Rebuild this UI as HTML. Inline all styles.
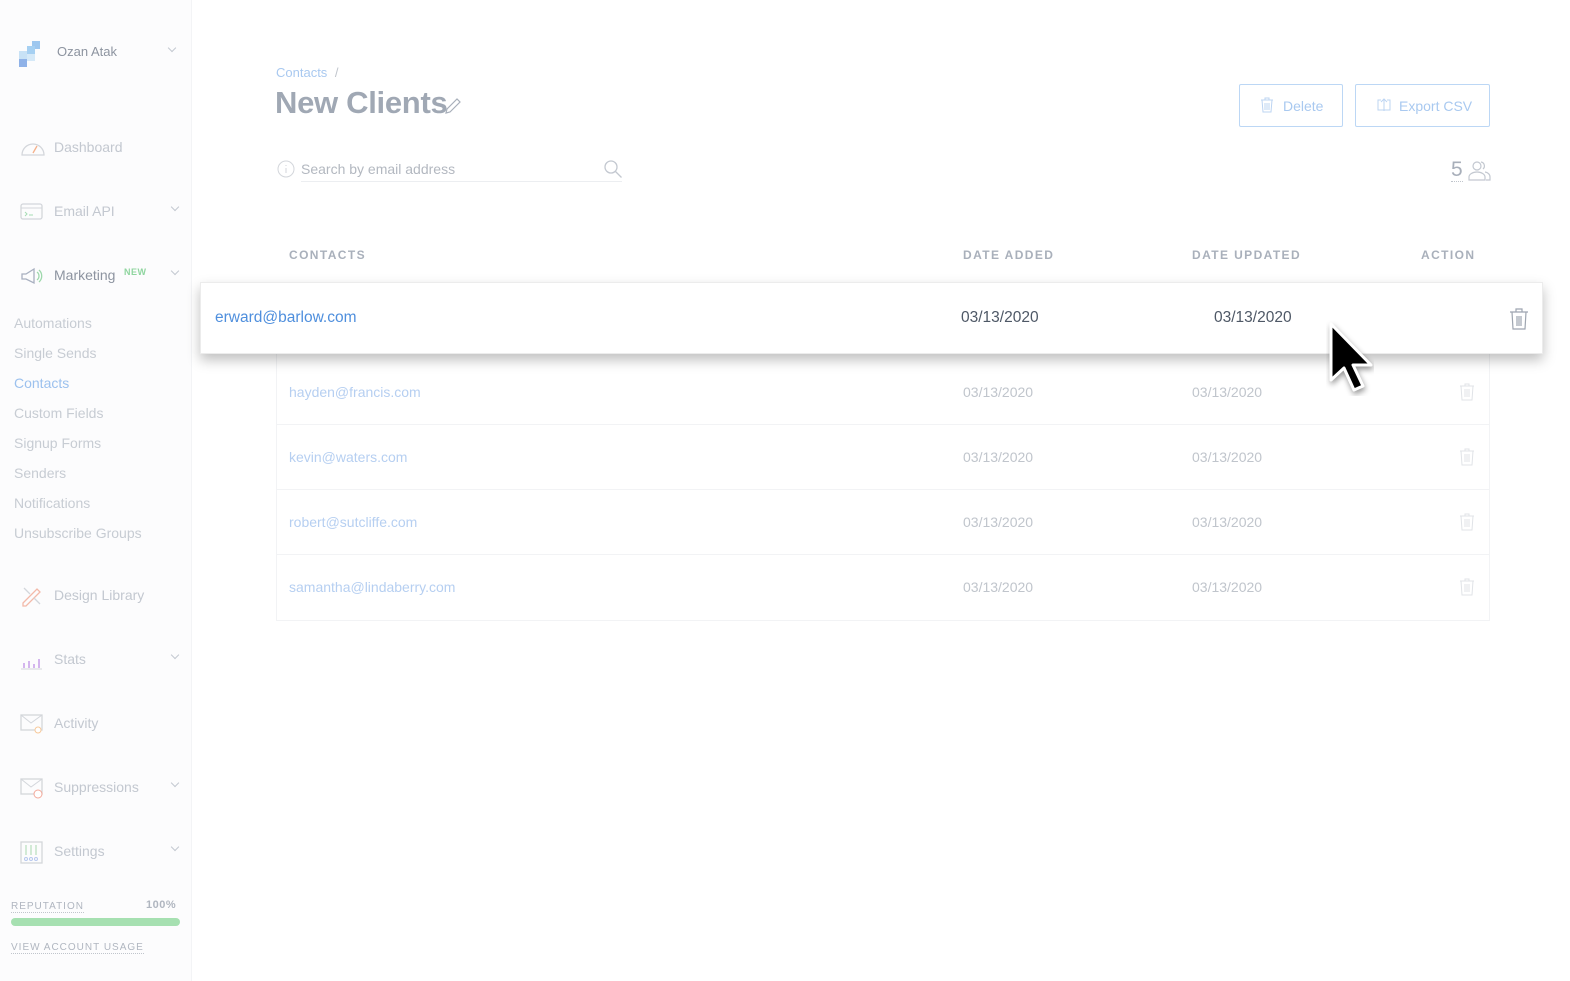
<!DOCTYPE html>
<html><head><meta charset="utf-8"><style>
*{margin:0;padding:0;box-sizing:border-box}
body{width:1570px;height:981px;background:#fff;font-family:"Liberation Sans",sans-serif;position:relative;overflow:hidden}
.sb{position:absolute;left:0;top:0;width:192px;height:981px;background:#fcfcfd;border-right:1px solid #f3f4f6}
.a{position:absolute}
.nav{position:absolute;left:54px;font-size:14px;color:#c3c8d0}
.sub{position:absolute;left:14px;font-size:14px;color:#c7ccd3}
.chev{position:absolute;left:172px;width:6px;height:6px;border-right:1px solid #c3c8d0;border-bottom:1px solid #c3c8d0;transform:rotate(45deg)}
.ic{position:absolute;left:20px}
.hd{position:absolute;top:248px;font-size:12px;font-weight:bold;letter-spacing:1.4px;color:#a9b0bb}
.row{position:absolute;left:276px;width:1214px;height:65px;border-bottom:1px solid #f2f3f5;font-size:14px}
.row span{position:absolute;top:24px}
.em{left:13px;color:#b6cff1}
.d1{left:687px;color:#c0c5cc}
.d2{left:916px;color:#c0c5cc}
.tr{position:absolute;left:1183px;top:23px}
</style></head><body>
<div class="sb">
<svg class="a" style="left:19px;top:41px" width="26" height="26"><rect x="13" y="0" width="8" height="8" fill="#9ec7ef"/><rect x="8" y="5" width="8" height="8" fill="#a6d0f2"/><rect x="0" y="10" width="8" height="8" fill="#c8e2f6"/><rect x="8" y="13" width="8" height="7" fill="#d5e9f8"/><rect x="0" y="18" width="8" height="8" fill="#8fb2e8"/></svg>
<div class="a" style="left:57px;top:44px;font-size:13px;color:#8d94a0">Ozan Atak</div>
<div class="chev" style="top:45px;left:169px"></div>
<svg class="ic" style="top:138px" width="26" height="20"><path d="M2 17A11 11 0 0 1 24 17Z" fill="none" stroke="#d3d6db" stroke-width="1.3"/><path d="M13 15L17 8" stroke="#f5b08a" stroke-width="1.3"/></svg>
<div class="nav" style="top:139px">Dashboard</div>
<svg class="ic" style="top:203px" width="24" height="18"><rect x="1" y="1" width="21" height="15" rx="2" fill="none" stroke="#d3d6db" stroke-width="1.3"/><line x1="1" y1="5" x2="22" y2="5" stroke="#d3d6db"/><path d="M5 9l2 2-2 2M9 12h4" stroke="#a5dcb4" fill="none"/></svg>
<div class="nav" style="top:203px">Email API</div><div class="chev" style="top:204px"></div>
<svg class="ic" style="top:266px" width="24" height="20"><path d="M2 8h4l8-5v14l-8-4H2z" fill="none" stroke="#a8b0c0" stroke-width="1.3"/><path d="M17 6a5 5 0 0 1 0 8M19 4a8 8 0 0 1 0 12" fill="none" stroke="#9ed8ac" stroke-width="1.3"/></svg>
<div class="nav" style="top:267px;color:#8d94a0">Marketing</div>
<div class="a" style="left:124px;top:267px;font-size:9px;font-weight:bold;color:#8fd59f;letter-spacing:.5px">NEW</div><div class="chev" style="top:268px"></div>
<div class="sub" style="top:315px">Automations</div>
<div class="sub" style="top:345px">Single Sends</div>
<div class="sub" style="top:375px;color:#9cc1ee">Contacts</div>
<div class="sub" style="top:405px">Custom Fields</div>
<div class="sub" style="top:435px">Signup Forms</div>
<div class="sub" style="top:465px">Senders</div>
<div class="sub" style="top:495px">Notifications</div>
<div class="sub" style="top:525px">Unsubscribe Groups</div>
<svg class="ic" style="top:584px" width="24" height="24"><path d="M3 19L17 5l3 3L6 22H3z" fill="none" stroke="#f3b9a9" stroke-width="1.3"/><path d="M4 4l6 6M14 14l6 6" stroke="#d3d6db" stroke-width="1.3"/></svg>
<div class="nav" style="top:587px">Design Library</div>
<svg class="ic" style="top:648px" width="24" height="22"><path d="M1 21h21" stroke="#d3d6db"/><path d="M4 20v-5M9 20v-7M14 20v-4M19 20v-9" stroke="#d4b6ee" stroke-width="2"/></svg>
<div class="nav" style="top:651px">Stats</div><div class="chev" style="top:652px"></div>
<svg class="ic" style="top:714px" width="26" height="22"><rect x="1" y="1" width="21" height="15" fill="none" stroke="#d3d6db" stroke-width="1.3"/><path d="M1 1l10 8 11-8" fill="none" stroke="#d3d6db"/><circle cx="18" cy="16" r="3" fill="#fff" stroke="#f7c99a"/></svg>
<div class="nav" style="top:715px">Activity</div>
<svg class="ic" style="top:778px" width="26" height="22"><rect x="1" y="1" width="21" height="15" fill="none" stroke="#d3d6db" stroke-width="1.3"/><path d="M1 1l10 8 11-8" fill="none" stroke="#d3d6db"/><circle cx="18" cy="16" r="4" fill="#fff" stroke="#f3a99a"/></svg>
<div class="nav" style="top:779px">Suppressions</div><div class="chev" style="top:780px"></div>
<svg class="ic" style="top:841px" width="24" height="24"><rect x="1" y="1" width="21" height="21" fill="none" stroke="#d3d6db" stroke-width="1.3"/><path d="M6 4v10M11 4v10M16 4v10" stroke="#a8d8b0"/><circle cx="6" cy="18" r="1.5" fill="none" stroke="#b8c8ee"/><circle cx="11" cy="18" r="1.5" fill="none" stroke="#b8c8ee"/><circle cx="16" cy="18" r="1.5" fill="none" stroke="#b8c8ee"/></svg>
<div class="nav" style="top:843px">Settings</div><div class="chev" style="top:844px"></div>
<div class="a" style="left:11px;top:901px;font-size:10px;color:#b0b6c0;letter-spacing:1px;border-bottom:1px dotted #c0c5cc">REPUTATION</div>
<div class="a" style="left:146px;top:899px;font-size:11px;color:#b0b6c0;font-weight:bold;letter-spacing:.5px">100%</div>
<div class="a" style="left:11px;top:918px;width:169px;height:8px;border-radius:4px;background:#a6e0b1"></div>
<div class="a" style="left:11px;top:942px;font-size:10px;color:#b0b6c0;letter-spacing:1px;border-bottom:1px dotted #c0c5cc">VIEW ACCOUNT USAGE</div>
</div>

<div class="a" style="left:276px;top:65px;font-size:13px;color:#a9c9f0">Contacts <span style="color:#c0c5cc;margin-left:4px">/</span></div>
<div class="a" style="left:275px;top:85px;font-size:31px;font-weight:bold;color:#a0a8b4;letter-spacing:-.3px">New Clients</div>
<svg class="a" style="left:444px;top:97px" width="18" height="18"><path d="M2 16l1-4L13 2l3 3L6 15z" fill="none" stroke="#a8afba" stroke-width="1.2"/></svg>
<div class="a" style="left:1239px;top:84px;width:104px;height:43px;border:1px solid #bcd7f5;border-radius:2px;color:#a9c9f0;font-size:14px;padding:13px 0 0 43px">Delete</div>
<svg class="a" style="left:1260px;top:97px" width="14" height="16"><path d="M1 3h12M5 3V1h4v2M2 3l1 12h8l1-12M5 6v7M7 6v7M9 6v7" fill="none" stroke="#bcd4f2"/></svg>
<div class="a" style="left:1355px;top:84px;width:135px;height:43px;border:1px solid #bcd7f5;border-radius:2px;color:#a9c9f0;font-size:14px;padding:13px 0 0 43px">Export CSV</div>
<svg class="a" style="left:1377px;top:97px" width="14" height="16"><path d="M4 3H1v10h12V3h-3M7 14V2M4 5l3-3 3 3" fill="none" stroke="#bcd4f2"/></svg>
<svg class="a" style="left:277px;top:160px" width="18" height="18"><circle cx="9" cy="9" r="8" fill="none" stroke="#d3d6db"/><path d="M9 8v5M9 5v1" stroke="#d3d6db"/></svg>
<div class="a" style="left:301px;top:161px;font-size:14px;color:#b3b8c0">Search by email address</div>
<div class="a" style="left:301px;top:181px;width:321px;height:1px;background:#eceef1"></div>
<svg class="a" style="left:603px;top:159px" width="20" height="20"><circle cx="8" cy="8" r="6" fill="none" stroke="#c3c8d0" stroke-width="1.3"/><path d="M12.5 12.5l6 6" stroke="#c3c8d0" stroke-width="1.3"/></svg>
<div class="a" style="left:1451px;top:159px;font-size:21px;color:#a8afba;border-bottom:1px dotted #c0c5cc;line-height:22px">5</div>
<svg class="a" style="left:1468px;top:160px" width="24" height="22"><circle cx="9" cy="6" r="4" fill="none" stroke="#c3c8d0" stroke-width="1.2"/><path d="M1 20v-3a8 5 0 0 1 16 0v3z" fill="none" stroke="#c3c8d0" stroke-width="1.2"/><path d="M13 2a4 4 0 0 1 2 7M17 12a6 5 0 0 1 5 5v3h-4" fill="none" stroke="#c3c8d0" stroke-width="1.2"/></svg>

<div class="hd" style="left:289px">CONTACTS</div>
<div class="hd" style="left:963px">DATE ADDED</div>
<div class="hd" style="left:1192px">DATE UPDATED</div>
<div class="hd" style="left:1421px">ACTION</div>

<div class="a" style="left:276px;top:290px;width:1214px;height:331px;border:1px solid #f2f3f5"></div>
<div class="row" style="top:360px"><span class="em">hayden@francis.com</span><span class="d1">03/13/2020</span><span class="d2">03/13/2020</span><svg class="tr" width="16" height="18"><path d="M1 3h14M6 3V1h4v2M2 3l1 14h10l1-14M6 6v8M8 6v8M10 6v8" fill="none" stroke="#e0e3e7"/></svg></div>
<div class="row" style="top:425px"><span class="em">kevin@waters.com</span><span class="d1">03/13/2020</span><span class="d2">03/13/2020</span><svg class="tr" width="16" height="18"><path d="M1 3h14M6 3V1h4v2M2 3l1 14h10l1-14M6 6v8M8 6v8M10 6v8" fill="none" stroke="#e0e3e7"/></svg></div>
<div class="row" style="top:490px"><span class="em">robert@sutcliffe.com</span><span class="d1">03/13/2020</span><span class="d2">03/13/2020</span><svg class="tr" width="16" height="18"><path d="M1 3h14M6 3V1h4v2M2 3l1 14h10l1-14M6 6v8M8 6v8M10 6v8" fill="none" stroke="#e0e3e7"/></svg></div>
<div class="row" style="top:555px;border-bottom:none"><span class="em">samantha@lindaberry.com</span><span class="d1">03/13/2020</span><span class="d2">03/13/2020</span><svg class="tr" width="16" height="18"><path d="M1 3h14M6 3V1h4v2M2 3l1 14h10l1-14M6 6v8M8 6v8M10 6v8" fill="none" stroke="#e0e3e7"/></svg></div>

<div class="a" style="left:200px;top:282px;width:1343px;height:72px;background:#fff;border:1px solid #ececec;box-shadow:0 6px 12px rgba(0,0,0,.25)">
<div class="a" style="left:14px;top:26px;font-size:15.5px;color:#4f8fdd">erward@barlow.com</div>
<div class="a" style="left:760px;top:26px;font-size:15.5px;color:#4e5866">03/13/2020</div>
<div class="a" style="left:1013px;top:26px;font-size:15.5px;color:#4e5866">03/13/2020</div>
<svg class="a" style="left:1308px;top:25px" width="20" height="22"><path d="M1 4h18M7 4V1h6v3M3 4l1 17h12l1-17M8 8v10M10 8v10M12 8v10" fill="none" stroke="#9ea5b0" stroke-width="1.2"/></svg>
</div>
<svg class="a" style="left:1326px;top:320px" width="48" height="76"><path d="M5 4v56l13-12 10 22 9-4-10-21h18z" fill="#000" stroke="#fff" stroke-width="3" stroke-linejoin="round" style="filter:drop-shadow(1px 3px 3px rgba(0,0,0,.4))"/></svg>
</body></html>
